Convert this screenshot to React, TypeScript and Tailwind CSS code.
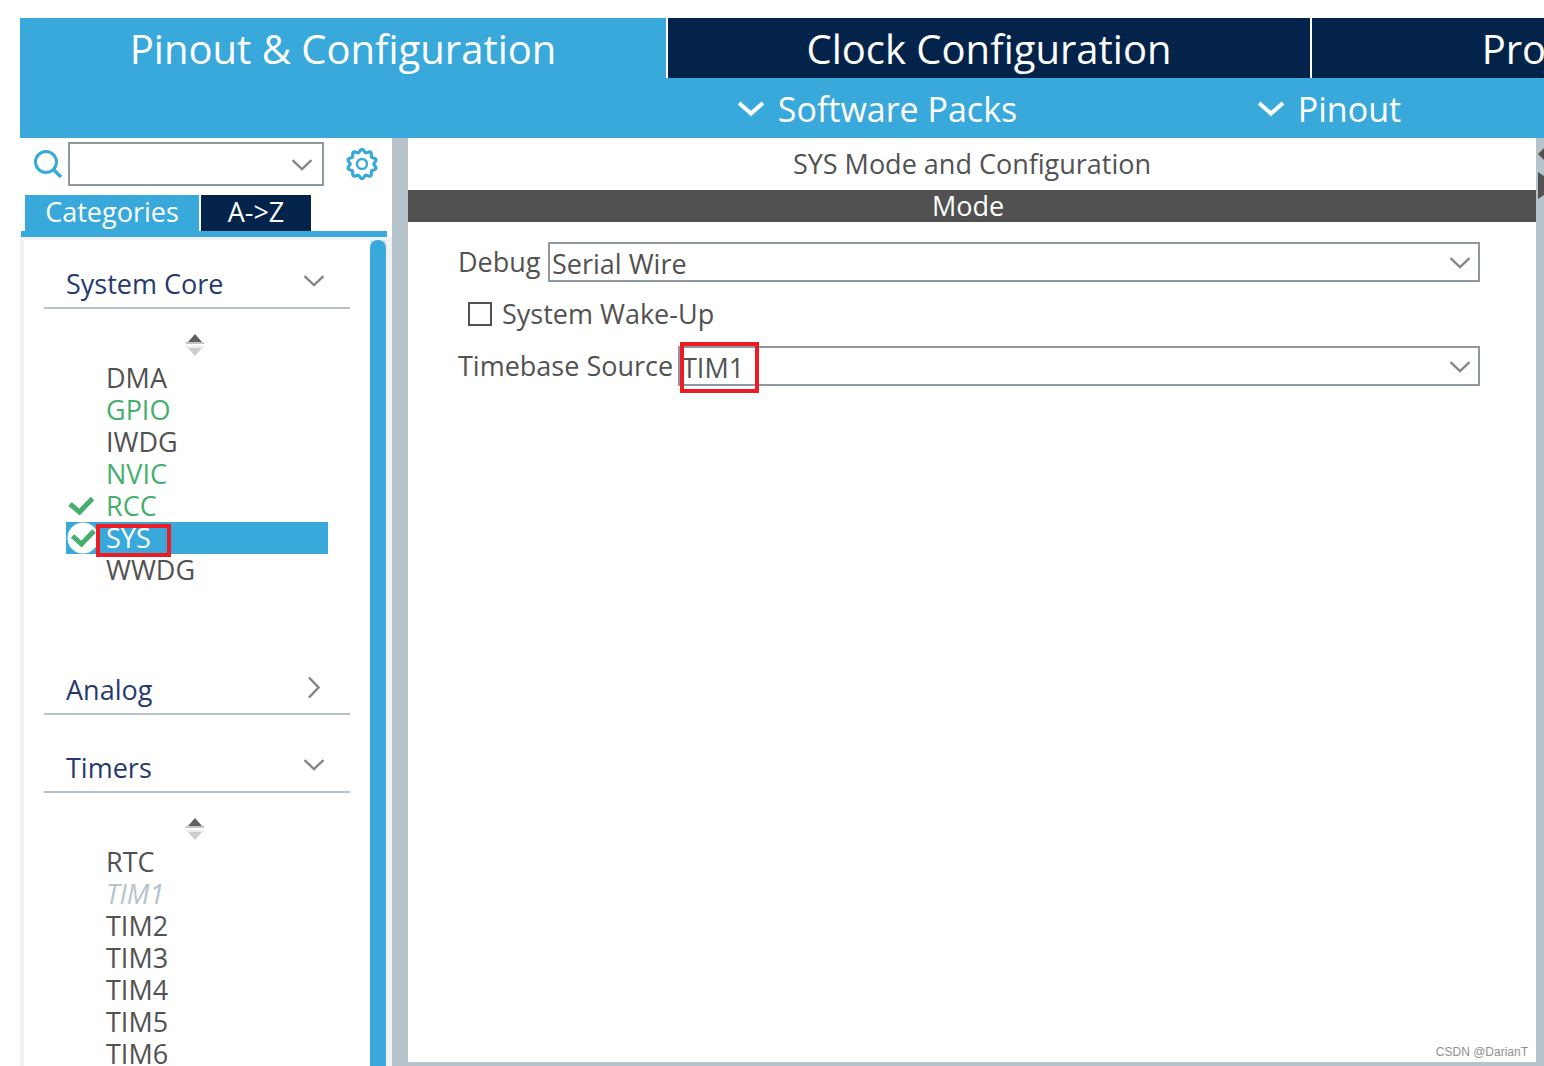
import React, { useState } from "react";

type Peripheral = {
  name: string;
  state?: "configured" | "disabled";
  checked?: boolean;
};

interface CategoryProps {
  title: string;
  items: Peripheral[];
  defaultOpen?: boolean;
  selected: string;
  onSelect: (name: string) => void;
}

const systemCore: Peripheral[] = [
  { name: "DMA" },
  { name: "GPIO", state: "configured" },
  { name: "IWDG" },
  { name: "NVIC", state: "configured" },
  { name: "RCC", state: "configured", checked: true },
  { name: "SYS", checked: true },
  { name: "WWDG" },
];

const analog: Peripheral[] = [{ name: "ADC1" }, { name: "ADC2" }];

const timers: Peripheral[] = [
  { name: "RTC" },
  { name: "TIM1", state: "disabled" },
  { name: "TIM2" },
  { name: "TIM3" },
  { name: "TIM4" },
  { name: "TIM5" },
  { name: "TIM6" },
];

// Outline of a gear with ten rounded teeth
const gearPoints = Array.from({ length: 120 }, (_, i) => {
  const angle = (i / 120) * Math.PI * 2;
  const r = 13.2 + 1.4 * Math.cos(10 * angle);
  return `${16 + r * Math.sin(angle)},${16 - r * Math.cos(angle)}`;
}).join(" ");

function ChevronDown({ className = "" }: { className?: string }) {
  return (
    <svg className={className} width="20" height="12" viewBox="0 0 20 12" fill="none" aria-hidden="true">
      <path d="M0.5 1L10 10L19.5 1" stroke="#858585" strokeWidth="2.4" />
    </svg>
  );
}

function ChevronRight() {
  return (
    <svg className="mr-1" width="12" height="21" viewBox="0 0 12 21" fill="none" aria-hidden="true">
      <path d="M1 0.5L10.5 10.5L1 20.5" stroke="#858585" strokeWidth="2.4" />
    </svg>
  );
}

function MenuChevron() {
  return (
    <svg width="26" height="16" viewBox="0 0 26 16" fill="none" aria-hidden="true">
      <path d="M1 2L13 12.5L25 2" stroke="white" strokeWidth="4" />
    </svg>
  );
}

function SearchIcon() {
  return (
    <svg width="28" height="28" viewBox="0 0 28 28" fill="none" stroke="#39a9dc" aria-hidden="true">
      <circle cx="12" cy="12" r="10.5" strokeWidth="3" />
      <path d="M19.5 19.5L27 27" strokeWidth="3.6" />
    </svg>
  );
}

function GearIcon() {
  return (
    <svg width="32" height="32" viewBox="0 0 32 32" fill="none" stroke="#39a9dc" aria-hidden="true">
      <polygon points={gearPoints} strokeWidth="3.2" />
      <circle cx="16" cy="16" r="5" strokeWidth="2.4" />
    </svg>
  );
}

function SortIcon() {
  return (
    <svg width="18" height="22" viewBox="0 0 18 22" aria-hidden="true">
      <path d="M9 0L16 8H2Z" fill="#606060" />
      <path d="M0 8H18V10H0Z" fill="#c4c4c4" />
      <path d="M0 12H18V14H0Z" fill="#ececec" />
      <path d="M2 14H16L9 22Z" fill="#cdcdcd" />
    </svg>
  );
}

function CheckMark({ active }: { active: boolean }) {
  return (
    <svg width="32" height="32" viewBox="0 0 32 32" fill="none" aria-hidden="true">
      {active && <circle cx="17" cy="16" r="15.5" fill="white" />}
      <path
        d={active ? "M6.500 14L15.500 22L28 9" : "M4 14L13.500 22L26.500 8.500"}
        stroke="#47ae70"
        strokeWidth="5"
      />
    </svg>
  );
}

function Category({ title, items, defaultOpen = false, selected, onSelect }: CategoryProps) {
  const [open, setOpen] = useState(defaultOpen);

  // Text color of a row depends on how the peripheral is set up
  const rowColor = (item: Peripheral) => {
    if (item.name === selected) return "bg-[#39a9dc] text-white";
    if (item.state === "configured") return "text-[#47ae70]";
    if (item.state === "disabled") return "text-[#b7c3ca] italic";
    return "text-[#525252]";
  };

  return (
    <section>
      <button
        type="button"
        aria-expanded={open}
        onClick={() => setOpen(!open)}
        className="flex h-[78px] w-full items-end justify-between border-b-2 border-[#b7c3ca] pr-[26px] pb-1 pl-[22px] text-[#273a70]"
      >
        <span className="leading-[38px]">{title}</span>
        <span className="flex h-11 items-center">{open ? <ChevronDown /> : <ChevronRight />}</span>
      </button>
      {open && (
        <div className="pr-[22px] pb-[51px] pl-[22px]">
          <div className="flex h-[53px] items-center justify-center pt-[18px] pr-1">
            <button type="button" aria-label={"Sort " + title}>
              <SortIcon />
            </button>
          </div>
          <ul>
            {items.map((item) => (
              <li key={item.name} className="relative">
                <button
                  type="button"
                  onClick={() => onSelect(item.name)}
                  className={"flex h-8 w-full items-center gap-2 text-left leading-8 " + rowColor(item)}
                >
                  <span className="w-8">{item.checked && <CheckMark active={item.name === selected} />}</span>
                  {item.name}
                </button>
                {item.name === "SYS" && (
                  <span className="pointer-events-none absolute top-0.5 left-[30px] h-[33px] w-[75px] border-4 border-[#ed1c24]" />
                )}
              </li>
            ))}
          </ul>
        </div>
      )}
    </section>
  );
}

function Sidebar() {
  const [selected, setSelected] = useState("SYS");

  return (
    <aside className="flex w-[372px] shrink-0 flex-col">
      <div className="flex h-[57px] shrink-0 items-start pt-1 pl-3.5">
        <label htmlFor="search" className="pt-2 pr-1.5">
          <SearchIcon />
        </label>
        <div className="relative">
          <input
            id="search"
            aria-label="Search peripherals"
            className="h-11 w-64 border-2 border-[#8f979f] bg-white px-2 outline-none"
          />
          <ChevronDown className="pointer-events-none absolute top-[17px] right-3" />
        </div>
        <button type="button" aria-label="Settings" className="pt-1.5 pl-[22px]">
          <GearIcon />
        </button>
      </div>

      <div className="flex shrink-0 gap-0.5 pl-[5px] leading-[34px] text-white">
        <button type="button" className="h-9 w-[174px] bg-[#39a9dc] pb-0.5">
          Categories
        </button>
        <button type="button" className="h-9 w-[110px] bg-[#03234b] pb-0.5">
          A-&gt;Z
        </button>
      </div>
      <div className="mr-[5px] ml-px h-1.5 shrink-0 bg-[#39a9dc]" />

      <div className="flex min-h-0 grow border-t-[3px] border-r-[6px] border-l-4 border-[#f0f1f2]">
        <div className="min-w-0 grow overflow-hidden pr-5 pl-5">
          <div className="-mt-[9px]">
            <Category title="System Core" items={systemCore} defaultOpen selected={selected} onSelect={setSelected} />
            <Category title="Analog" items={analog} selected={selected} onSelect={setSelected} />
            <Category title="Timers" items={timers} defaultOpen selected={selected} onSelect={setSelected} />
          </div>
        </div>
        <div className="w-4 bg-[#d3e6f2]">
          <div className="h-full rounded-t-full bg-[#39a9dc]" />
        </div>
      </div>
    </aside>
  );
}

function ModePanel() {
  return (
    <main className="flex min-w-0 grow flex-col border-b-4 border-l-[16px] border-[#b7c3ca] text-[#525252]">
      <h1 className="h-[52px] text-center leading-[52px]">SYS Mode and Configuration</h1>
      <h2 className="h-8 bg-[#505150] pr-2 text-center leading-8 text-white">Mode</h2>

      <form className="flex flex-col gap-5 pt-5 pr-14 pl-[50px]">
        <div className="flex h-10 items-center">
          <label htmlFor="debug" className="w-[90px] shrink-0">
            Debug
          </label>
          <div className="relative grow">
            <select
              id="debug"
              className="block h-10 w-full appearance-none border-2 border-[#8f979f] bg-white pb-1 pl-0.5 outline-none"
            >
              <option>Serial Wire</option>
              <option>Disable</option>
            </select>
            <ChevronDown className="pointer-events-none absolute top-[15px] right-2.5" />
          </div>
        </div>

        <label className="flex h-6 items-center gap-2.5 pl-2.5">
          <input type="checkbox" className="size-6 appearance-none border-2 border-[#525252] checked:bg-[#39a9dc]" />
          System Wake-Up
        </label>

        <div className="flex h-10 items-center">
          <label htmlFor="timebase" className="w-[220px] shrink-0">
            Timebase Source
          </label>
          <div className="relative grow">
            <select
              id="timebase"
              className="block h-10 w-full appearance-none border-2 border-[#8f979f] bg-white pb-1 pl-0.5 outline-none"
            >
              <option>TIM1</option>
              <option>SysTick</option>
            </select>
            <ChevronDown className="pointer-events-none absolute top-[15px] right-2.5" />
            <span className="pointer-events-none absolute -top-1 left-0.5 h-[51px] w-[79px] border-4 border-[#ed1c24]" />
          </div>
        </div>
      </form>

      <p className="mt-auto pr-2 pb-1 text-right font-['Liberation_Sans'] text-xs leading-3 text-[#909090]">
        CSDN @DarianT
      </p>
    </main>
  );
}

// Divider with the collapse arrows at its top
function Splitter() {
  return (
    <div className="w-2 shrink-0 bg-[#b7c3ca] pt-2.5">
      <svg width="8" height="52" viewBox="0 0 8 52" fill="#525252" aria-hidden="true">
        <path d="M2 6L8 0V12Z" />
        <path d="M2 24L8 28V47L2 51Z" />
      </svg>
    </div>
  );
}

export default function App() {
  return (
    <div className="flex h-screen flex-col overflow-hidden bg-white pt-[18px] pl-5 font-['Open_Sans',sans-serif] text-[27px]">
      <nav className="flex h-[60px] shrink-0 gap-0.5 text-[40px] leading-[62px] text-white">
        <button type="button" className="w-[42.4%] shrink-0 bg-[#39a9dc]">
          Pinout &amp; Configuration
        </button>
        <button type="button" className="w-[42.1%] shrink-0 bg-[#03234b]">
          Clock Configuration
        </button>
        <button type="button" className="w-[42.4%] shrink-0 bg-[#03234b]">
          Project Manager
        </button>
      </nav>

      <div className="flex h-[60px] shrink-0 bg-[#39a9dc] pt-0.5 pl-[47.1%] text-[34px] text-white">
        <button type="button" className="flex w-[64.5%] items-center gap-3.5">
          <MenuChevron />
          Software Packs
        </button>
        <button type="button" className="flex items-center gap-3.5">
          <MenuChevron />
          Pinout
        </button>
      </div>

      <div className="flex min-h-0 grow">
        <Sidebar />
        <ModePanel />
        <Splitter />
      </div>
    </div>
  );
}
